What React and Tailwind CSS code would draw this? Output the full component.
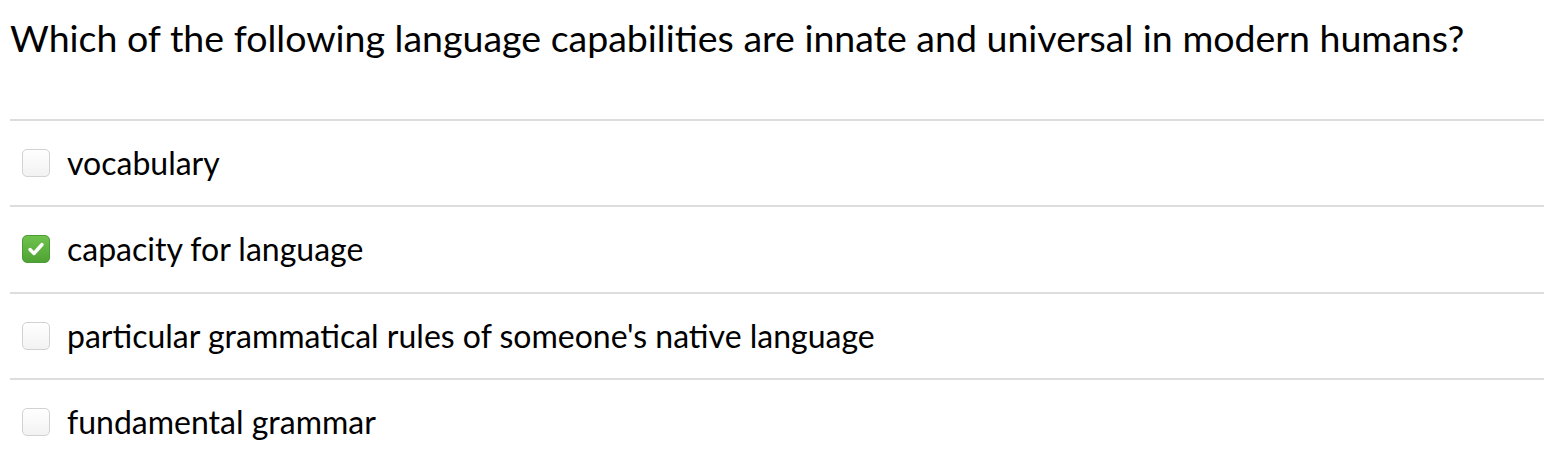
import React from "react";

const options = [
  { label: "vocabulary", checked: false },
  { label: "capacity for language", checked: true },
  { label: "particular grammatical rules of someone's native language", checked: false },
  { label: "fundamental grammar", checked: false },
];

const Checkbox = ({ checked }) => {
  if (checked) {
    return (
      <span className="w-[28px] h-[28px] rounded-[5px] bg-gradient-to-b from-[#6fc24c] to-[#4ea334] border border-[#4c9c35] flex items-center justify-center shrink-0">
        <svg width="20" height="20" viewBox="0 0 20 20">
          <path d="M4 10.5 L8 14.5 L16 5.5" fill="none" stroke="white" strokeWidth="3.4" strokeLinecap="round" strokeLinejoin="round" />
        </svg>
      </span>
    );
  }
  return (
    <span className="w-[28px] h-[28px] rounded-[5px] bg-gradient-to-b from-white to-[#f2f2f2] border border-[#d2d2d2] shrink-0" />
  );
};

export default function App() {
  return (
    <div className="bg-white min-h-[470px] pl-[10px] text-black" style={{ fontFamily: "Lato, 'Open Sans', sans-serif" }}>
      <h1 className="pt-[15px] mb-[59px] text-[37.5px] leading-[45px] font-normal">
        Which of the following language capabilities are innate and universal in modern humans?
      </h1>
      <ul>
        {options.map((opt) => (
          <li key={opt.label} className="border-t-2 border-[#dddddd] h-[86.3px] flex items-center gap-[17px] pl-[12px]">
            <Checkbox checked={opt.checked} />
            <span className="text-[32px] leading-none">{opt.label}</span>
          </li>
        ))}
      </ul>
    </div>
  );
}
